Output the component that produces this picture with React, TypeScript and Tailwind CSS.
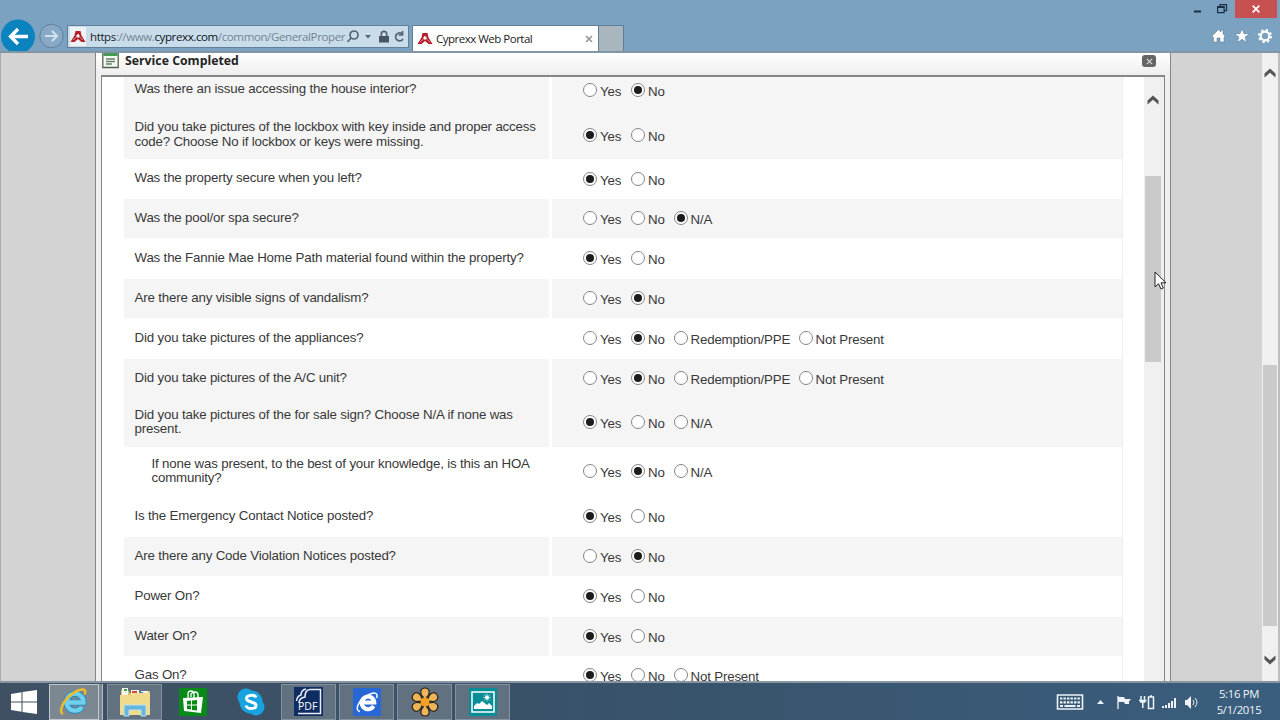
import { useState } from "react";
import clsx from "clsx";

interface Question {
  text: string;
  options: string[];
  answer: string;
  height: string;
  shaded?: boolean;
  indent?: boolean;
}

const YES_NO = ["Yes", "No"];
const YES_NO_NA = ["Yes", "No", "N/A"];
const APPLIANCE = ["Yes", "No", "Redemption/PPE", "Not Present"];

const questions: Question[] = [
  { text: "Was there an issue accessing the house interior?", options: YES_NO, answer: "No", height: "h-[42px]", shaded: true },
  { text: "Did you take pictures of the lockbox with key inside and proper access code? Choose No if lockbox or keys were missing.", options: YES_NO, answer: "Yes", height: "h-[48px]", shaded: true },
  { text: "Was the property secure when you left?", options: YES_NO, answer: "Yes", height: "h-[40px]" },
  { text: "Was the pool/or spa secure?", options: YES_NO_NA, answer: "N/A", height: "h-[39px]", shaded: true },
  { text: "Was the Fannie Mae Home Path material found within the property?", options: YES_NO, answer: "Yes", height: "h-[41px]" },
  { text: "Are there any visible signs of vandalism?", options: YES_NO, answer: "No", height: "h-[39px]", shaded: true },
  { text: "Did you take pictures of the appliances?", options: APPLIANCE, answer: "No", height: "h-[41px]" },
  { text: "Did you take pictures of the A/C unit?", options: APPLIANCE, answer: "No", height: "h-[39px]", shaded: true },
  { text: "Did you take pictures of the for sale sign? Choose N/A if none was present.", options: YES_NO_NA, answer: "Yes", height: "h-[49px]", shaded: true },
  { text: "If none was present, to the best of your knowledge, is this an HOA community?", options: YES_NO_NA, answer: "No", height: "h-[49px]", indent: true },
  { text: "Is the Emergency Contact Notice posted?", options: YES_NO, answer: "Yes", height: "h-[41px]" },
  { text: "Are there any Code Violation Notices posted?", options: YES_NO, answer: "No", height: "h-[39px]", shaded: true },
  { text: "Power On?", options: YES_NO, answer: "Yes", height: "h-[41px]" },
  { text: "Water On?", options: YES_NO, answer: "Yes", height: "h-[39px]", shaded: true },
  { text: "Gas On?", options: ["Yes", "No", "Not Present"], answer: "Yes", height: "h-[39px]" },
];

const optionWidth: Record<string, string> = {
  Yes: "w-[48px]",
  No: "w-[42.5px]",
  "N/A": "w-[60px]",
  "Redemption/PPE": "w-[125px]",
  "Not Present": "w-[100px]",
};

function Radio({ label, checked, onSelect }: { label: string; checked: boolean; onSelect: () => void }) {
  return (
    <button onClick={onSelect} className={clsx("flex shrink-0 items-center gap-[3px] text-left", optionWidth[label])}>
      <span className="flex size-[14px] shrink-0 items-center justify-center rounded-full border border-[#858585] bg-white">
        {checked && <span className="size-2 rounded-full bg-[#1c1c1c]" />}
      </span>
      <span className="whitespace-nowrap pt-[3px] leading-[15px] tracking-[-0.17px]">{label}</span>
    </button>
  );
}

function QuestionRow({ question }: { question: Question }) {
  const [answer, setAnswer] = useState(question.answer);
  const bg = question.shaded ? "bg-[#f5f5f5]" : "bg-white";
  return (
    <div className={clsx("flex shrink-0 gap-[3px]", question.height)}>
      <div className={clsx("flex w-[425px] items-center pb-px pr-2", bg, question.indent ? "pl-[27.5px]" : "pl-[10.5px]")}>
        <p className="leading-[14.5px] tracking-[-0.17px]">{question.text}</p>
      </div>
      <div className={clsx("flex flex-1 items-center border-r border-[#efefef] pb-px pl-[31px]", bg)}>
        {question.options.map((o) => (
          <Radio key={o} label={o} checked={o === answer} onSelect={() => setAnswer(o)} />
        ))}
      </div>
    </div>
  );
}

function CyprexxLogo() {
  return (
    <svg viewBox="0 0 16 14" className="h-[14px] w-4 shrink-0">
      <path d="M5.500 1h5l1 4.500L15.500 12h-4L8 9 4.500 12h-4l4-6.500z" fill="#b51d2b" />
      <path d="M8 3.700 10 6 8 8 6 6z" fill="#fff" />
      <path d="M3 10 7 6.500M13 10 9 6.500" fill="none" stroke="#e9b9bd" strokeWidth=".7" />
    </svg>
  );
}

function Chevron({ down = false }: { down?: boolean }) {
  return (
    <svg viewBox="0 0 12 10" className={clsx("h-[10px] w-3", down && "rotate-180")}>
      <path d="M.5 5.500 6 .5l5.500 5V9.500L6 4.800.5 9.500z" fill="#555" />
    </svg>
  );
}

function BrowserChrome() {
  return (
    <header className="flex h-[53px] shrink-0 items-start justify-between border-b-2 border-[#8295a5] bg-[#7ba2c1]">
      <div className="flex pt-[19px]">
        <svg viewBox="0 0 36 34" className="h-[32px] w-9" preserveAspectRatio="xMidYMin slice">
          <circle cx="18" cy="17.500" r="17" fill="#0a83be" />
          <path d="M28 17.500H11M18 10l-7.500 7.500L18 25" fill="none" stroke="#fff" strokeWidth="3.300" />
        </svg>
        <svg viewBox="0 0 26 26" className="ml-[3px] mt-1 size-[26px]">
          <circle cx="12.500" cy="13" r="11.700" fill="#88a9c5" stroke="#607f9d" />
          <path d="M6 13h12M13 8l5 5-5 5" fill="none" stroke="#d2e1ed" strokeWidth="2.200" />
        </svg>
        <div className="ml-[2px] mt-[6px] flex h-[23px] w-[342px] items-center border border-[#617f99] bg-[#c9dcea] pl-[2px] font-['Open_Sans',sans-serif] text-[11.5px]">
          <span className="flex h-[19px] w-4 items-center bg-[#edf2f6]"><CyprexxLogo /></span>
          <span className="ml-[4px] w-[254px] whitespace-nowrap tracking-[-0.38px] text-[#738391]">
            <span className="text-[#1b2229]">https</span>://www.<span className="text-[#0b1117]">cyprexx.com</span>/common/GeneralProper
          </span>
          <svg viewBox="0 0 62 16" className="ml-[2px] h-4 w-[62px] shrink-0" fill="none" stroke="#566471" strokeWidth="1.700">
            <circle cx="8" cy="6" r="4" />
            <path d="M5 9 1.500 13" />
            <path d="M19 6h6l-3 3.500z" fill="#566471" stroke="none" />
            <path d="M33 7h10v6.500H33z" fill="#4b535c" stroke="none" />
            <path d="M35.300 7V5a2.700 2.700 0 0 1 5.400 0v2" />
            <path d="M55.700 4.500a4 4 0 1 0 1.300 5.500M56.500 2v4h-4" />
          </svg>
        </div>
        <div className="ml-[3px] mt-[6px] flex h-[26px] w-[187px] items-center border border-b-0 border-[#617f99] bg-white pl-[4px] pr-[5px]">
          <CyprexxLogo />
          <span className="ml-[3px] flex-1 whitespace-nowrap font-['Open_Sans',sans-serif] text-[11.5px] tracking-[-0.5px] text-[#222]">Cyprexx Web Portal</span>
          <svg viewBox="0 0 8 8" className="size-2"><path d="m1 1 6 6M7 1 1 7" stroke="#999" strokeWidth="1.700" /></svg>
        </div>
        <div className="mt-[6px] h-[26px] w-[25px] border-r border-t border-[#617f99] bg-[#a9b6bf]" />
      </div>
      <div className="flex w-[100px] flex-col">
        <div className="flex h-[18px]">
          <svg viewBox="0 0 55 18" className="h-[18px] w-[55px]" fill="none" stroke="#192f42" strokeWidth="1.200">
            <path d="M14 11.500h7" strokeWidth="2" />
            <path d="M37.600 6.600h6.500v6h-6.500zM40 6V4.600h6.500v6H44" />
            <path d="M37.500 7h7" strokeWidth="2" />
          </svg>
          <div className="flex h-[18px] w-[42px] items-center justify-center bg-[#c75050]">
            <svg viewBox="0 0 8 8" className="size-2"><path d="m.7.700 6.600 6.600m0-6.600L.7 7.300" stroke="#fff" strokeWidth="1.700" /></svg>
          </div>
        </div>
        <svg viewBox="0 0 70 18" className="ml-[29px] mt-[9px] h-[18px] w-[70px]" fill="#fff" stroke="#526d84" strokeWidth=".5">
          <path d="M3 9 9.500 2.500 12 5V3h2v4l2 2-1 1.500V15h-4v-4H8v4H4.500v-4.500z" />
          <path d="m33 1.500 2 5.200h5.500l-4.400 3.400 1.700 5.400L33 12.300l-4.800 3.200 1.700-5.400-4.400-3.400H31z" />
          <g fill="none" stroke="#fff">
            <circle cx="56" cy="9" r="4.300" strokeWidth="2.200" />
            <circle cx="56" cy="9" r="6.100" strokeWidth="1.900" strokeDasharray="2.400 2.390" />
          </g>
        </svg>
      </div>
    </header>
  );
}

function ServicePanel() {
  return (
    <section className="flex w-[1076px] flex-col border-x border-[#858585] bg-[#f0f0f0]">
      <div className="flex h-[22px] shrink-0 items-start justify-between bg-linear-to-b from-white to-[#eee] pl-[6px] pr-[14px]">
        <div className="flex items-start">
          <svg viewBox="0 0 17 16" className="h-4 w-[17px]">
            <path d="M.8-2h15.400v16.500H.8z" fill="#f5f7f3" stroke="#52624f" strokeWidth="1.300" />
            <path d="M1.500 0h14v3h-14z" fill="#459955" />
            <path d="M4 6h9M4 8.500h9M4 11h6" stroke="#65816a" strokeWidth="1.300" />
          </svg>
          <h1 className="ml-[6px] whitespace-nowrap font-['Open_Sans',sans-serif] text-[12.3px] font-bold leading-[15px] text-[#252525]">Service Completed</h1>
        </div>
        <button className="mt-[2px] flex h-3 w-[14px] items-center justify-center rounded-[3px] bg-[#656565]">
          <svg viewBox="0 0 8 8" className="size-[7px]"><path d="m1 1 6 6M7 1 1 7" stroke="#ddd" strokeWidth="1.200" /></svg>
        </button>
      </div>
      <div className="mx-[5px] flex min-h-0 flex-1 border-x border-t-2 border-[#858585] bg-white">
        <div className="flex min-w-0 flex-1 flex-col overflow-hidden pl-[22px] pr-[21px] font-['Liberation_Sans',Arial,sans-serif] text-[13.3px] text-[#383838]">
          <div className="-mt-[8px] flex flex-col">
            {questions.map((q) => (
              <QuestionRow key={q.text} question={q} />
            ))}
          </div>
        </div>
        <div className="flex w-5 flex-col items-center bg-[#f0f0f0] pr-[3px] pt-[18px]">
          <Chevron />
          <div className="mt-[71px] h-[186px] w-4 bg-[#cacaca]" />
        </div>
      </div>
    </section>
  );
}

function TaskButton({ children, active = false }: { children: React.ReactNode; active?: boolean }) {
  return (
    <button
      className={clsx(
        "flex h-9 items-center justify-center border",
        active ? "w-[50px] border-[#c1c8cd] bg-[#7b8791]" : "w-[55px] border-[#8392a0] bg-[#61717f]",
      )}
    >
      {children}
    </button>
  );
}

function InternetExplorerIcon() {
  return (
    <svg viewBox="0 0 32 32" className="size-8">
      <path d="M24 21a8.500 8.500 0 1 1 1.500-4.500H10" fill="none" stroke="#268abd" strokeWidth="6" />
      <path d="M24 21a8.500 8.500 0 1 1 1.500-4.500H10" fill="none" stroke="#6fd0ee" strokeWidth="4.300" />
      <path d="M5 28C-1 25 8 9 20 4.500c7-2.500 8.500 0 6.500 4" fill="none" stroke="#eabc2c" strokeWidth="2.500" />
    </svg>
  );
}

function Taskbar() {
  return (
    <footer className="flex h-[39px] shrink-0 items-center justify-between border-t-2 border-[#8796a2] bg-linear-to-r from-[#3f5063] via-[#38536a] to-[#3a5e7e]">
      <div className="flex items-center">
        <button className="flex w-[49px] justify-center pr-[2px]">
          <svg viewBox="0 0 26 24" className="h-6 w-[26px]" fill="#fff">
            <path d="M0 4 10.500 2.200v9.300H0zM11.500 2 26 0v11.500H11.500zM0 12.500h10.500v9.300L0 20zM11.500 12.500H26V24l-14.500-2z" />
          </svg>
        </button>
        <TaskButton active><InternetExplorerIcon /></TaskButton>
        <div className="h-9 w-[4px] border-r border-[#b2bbc2] bg-[#7b8791]" />
        <div className="ml-1 flex items-center gap-[3px]">
          <TaskButton>
            <svg viewBox="0 0 32 30" className="h-[30px] w-8">
              <path d="M2 3h7l2 3h12l1-2h7v23H2z" fill="#d9bf68" />
              <path d="M3 1h6v8H3zM12 3h8v7h-8zM22 4h7v8h-7z" fill="#f6f4e8" />
              <path d="M5 2h3v2H5z" fill="#35a256" />
              <path d="M13 4h5v2h-5z" fill="#d24b38" />
              <path d="M20 5h4v2h-4z" fill="#3986c5" />
              <path d="M1 8h11l2-2h17v22H1z" fill="#f0da8c" />
              <path d="M5 29V18h22v11h-5v-6H10v6z" fill="#65b6df" stroke="#c0e4f1" />
            </svg>
          </TaskButton>
          <button className="flex w-[55px] justify-center">
            <svg viewBox="0 0 28 28" className="size-7">
              <path fill="#078b16" d="M0 0h28v28H0z" />
              <path d="M9 10V6q0-3 3-3t3 3v4M12 9V6q1-2 4-2t3 3v3" fill="none" stroke="#fff" strokeWidth="1.300" />
              <path d="m4 10 20-1-2 16-17-2z" fill="#fff" />
              <path d="m8 13 4-.4v4H8zm5-.5 5-.5v4.600h-5zM8 17.500h4v4l-4-.4zm5 0h5v5l-5-.6z" fill="#078b16" />
            </svg>
          </button>
          <button className="flex w-[55px] justify-center">
            <svg viewBox="0 0 28 28" className="size-7">
              <circle cx="9" cy="9" r="8.500" fill="#16a3df" />
              <circle cx="19" cy="19" r="8.500" fill="#16a3df" />
              <circle cx="14" cy="14" r="11.500" fill="#16a3df" />
              <path d="M19 9.500c-1-3-9.500-3-9.500 1 0 4.500 9.500 2.500 9.500 7 0 4-9 4-10 0" fill="none" stroke="#fff" strokeWidth="3" />
            </svg>
          </button>
          <TaskButton>
            <div className="relative h-[29px] w-[29px] bg-[#102d63]">
              <svg viewBox="0 0 29 29" className="size-[29px]" fill="none" stroke="#e9eef6" strokeWidth="1.500">
                <path d="M2.500 14Q3 9 7 8q0-5 5-6M5 16q0-5 6-6 0-7 5-7.500h10.500v24H4" />
              </svg>
              <span className="absolute bottom-[4px] left-[4px] font-['Open_Sans',sans-serif] text-[10.5px] leading-[12px] text-white">PDF</span>
            </div>
          </TaskButton>
          <TaskButton>
            <svg viewBox="0 0 28 28" className="size-7">
              <path fill="#2868d6" d="M0 0h28v28H0z" />
              <path d="M20.500 18a6.300 6.300 0 1 1 .8-3.500H10" fill="none" stroke="#fff" strokeWidth="4" />
              <path d="M7 23.500C1 23 5 12 15 7q8-4 9 0 .3 1.500-.5 3" fill="none" stroke="#fff" strokeWidth="1.500" />
            </svg>
          </TaskButton>
          <TaskButton>
            <svg viewBox="0 0 30 30" className="size-[30px]" fill="#efb458" stroke="#26231e" strokeWidth="1.200">
              {[0, 60, 120, 180, 240, 300].map((angle) => (
                <path key={angle} d="M15 15 13.500 10.500C9 6 10.500 1 15 1s6 5 1.500 9.500z" transform={`rotate(${angle} 15 15)`} />
              ))}
              <circle cx="15" cy="15" r="4.500" fill="#f4a020" stroke="none" />
            </svg>
          </TaskButton>
          <TaskButton>
            <svg viewBox="0 0 28 28" className="size-7">
              <path fill="#078d96" d="M0 0h28v28H0z" />
              <path d="M3 4h22v20H3z" fill="none" stroke="#fff" strokeWidth="1.500" />
              <path d="M5 21v-3l3-3 2 1 3-3 5 4 2-2 3 3v3z" fill="#fff" />
              <circle cx="18" cy="9.500" r="2" fill="#fff" />
              <path d="M18 5.500v8M14 9.500h8m-7-3 6 6m0-6-6 6" stroke="#fff" strokeWidth=".6" />
            </svg>
          </TaskButton>
        </div>
      </div>
      <div className="flex items-center pr-[18px] font-['Open_Sans',sans-serif] text-[11.3px] leading-[15.500px] text-[#f2f5f8]">
        <svg viewBox="0 0 144 20" className="mr-[16px] h-5 w-36" fill="none" stroke="#edf3f7">
          <path d="M1.500 3h25v14h-25z" strokeWidth="1.600" />
          <path d="M4 6.500h20M4 10.300h20" strokeDasharray="2.400 1.100" strokeWidth="2.200" />
          <path d="M4 14h3m1.500 0h11m1.500 0h3" strokeWidth="1.800" />
          <path d="m41 12 3.500-4 3.500 4z" fill="#edf3f7" stroke="none" />
          <path d="M62 4v13" strokeWidth="1.300" />
          <path d="M62 5h6l1 2h6l-2 2.500v2.500h-4l-1-2h-6z" fill="#edf3f7" stroke="none" />
          <path d="M85 4v4m3.500-4v4M83 8.500h7.500M84 10h5.500M86.800 10v6M92.500 5h5v11.500h-5zM94 4h2" strokeWidth="1.500" />
          <path d="M107 16v-2m3 2v-3m3 3v-5m3 5V9m3 7V6" strokeWidth="2" />
          <path d="M129 8h2l4-4v13l-4-4h-2z" fill="#edf3f7" stroke="none" />
          <path d="M137 8q2 2 0 5M139 6q4 4 0 9" />
        </svg>
        <div className="w-[46px] whitespace-nowrap text-center tracking-[-0.3px]">
          <p>5:16 PM</p>
          <p>5/1/2015</p>
        </div>
      </div>
    </footer>
  );
}

export default function App() {
  return (
    <div className="relative flex h-screen w-screen flex-col overflow-hidden bg-[#d3d3d3]">
      <BrowserChrome />
      <main className="flex min-h-0 flex-1 justify-between border-l border-[#aaa] pl-[94px]">
        <ServicePanel />
        <div className="flex w-[18px] flex-col items-center border-r-2 border-[#bdbdbd] bg-[#f0f0f0] pb-[16px] pt-[15px]">
          <Chevron />
          <div className="mt-auto h-[261px] w-[14px] bg-[#cacaca]" />
          <div className="mt-[29px]"><Chevron down /></div>
        </div>
      </main>
      <Taskbar />
      {/* Mouse pointer */}
      <svg viewBox="0 0 13 19" className="absolute left-[1154px] top-[271px] h-[19px] w-[13px]">
        <path d="M1 1v15l3.500-3.300L7 18l2.300-1L7 11.800h5z" fill="#fff" stroke="#222" />
      </svg>
    </div>
  );
}
